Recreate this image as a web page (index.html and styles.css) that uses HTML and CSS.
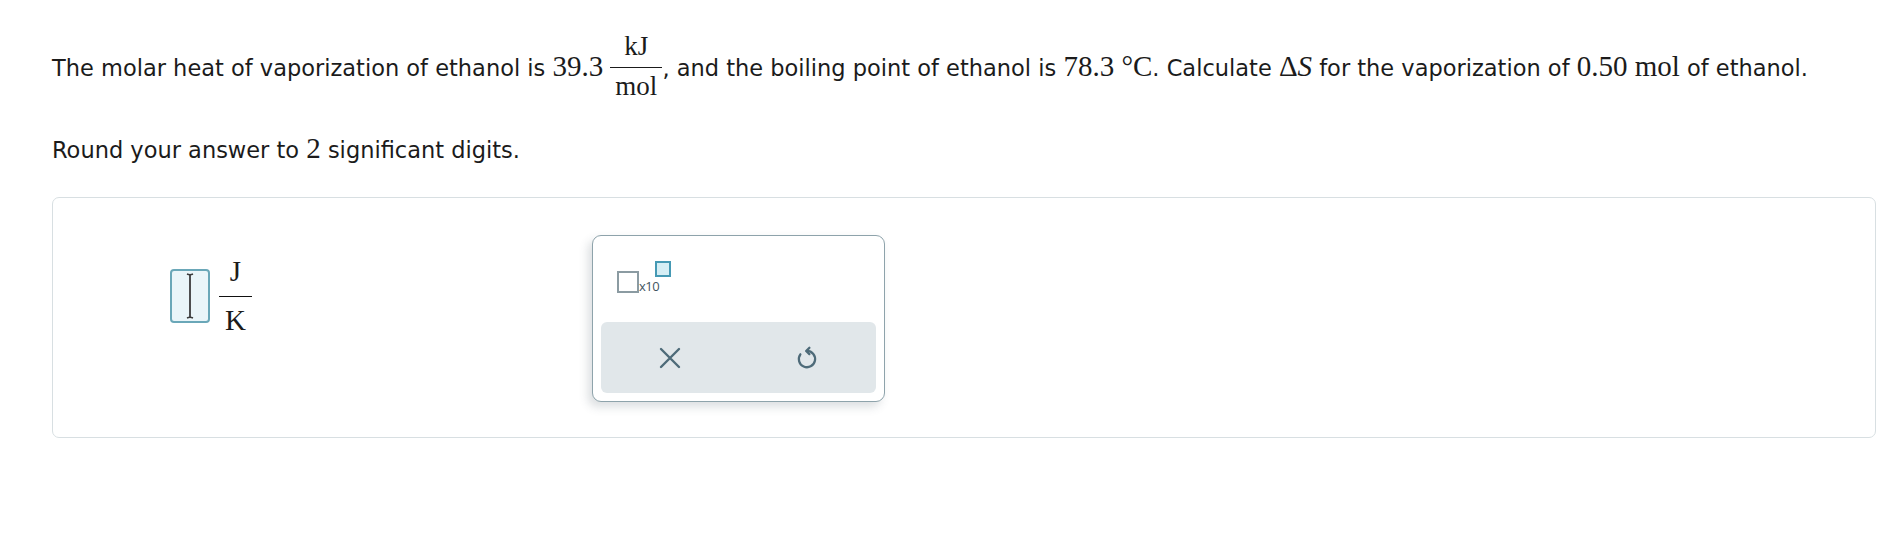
FILE: index.html
```html
<!DOCTYPE html>
<html>
<head>
<meta charset="utf-8">
<link rel="stylesheet" href="styles.css">
</head>
<body>
<div class="page">
  <p class="q1">The molar heat of vaporization of ethanol is <span class="m">39.3</span> <span class="frac"><span class="num">kJ</span><span class="den">mol</span></span>, and the boiling point of ethanol is <span class="m">78.3 °C</span>. Calculate <span class="m">Δ<i>S</i></span> for the vaporization of <span class="m">0.50 mol</span> of ethanol.</p>
  <p class="q2">Round your answer to <span class="m">2</span> significant digits.</p>
  <div class="card">
    <div class="answer">
      <div class="input">
        <svg class="cursor" width="12" height="48" viewBox="0 0 12 48">
          <path d="M6 3 V45" stroke="#3c3c3c" stroke-width="1.8" fill="none"/>
          <path d="M3 2 Q6 3.5 9 2 M3 46 Q6 44.5 9 46" stroke="#3c3c3c" stroke-width="1.4" fill="none"/>
        </svg>
      </div>
      <span class="frac unit"><span class="num">J</span><span class="den">K</span></span>
    </div>
    <div class="keypad">
      <div class="keys">
        <div class="sci">
          <span class="box-base"></span><span class="x10">x10</span><span class="box-exp"></span>
        </div>
      </div>
      <div class="actions">
        <div class="act">
          <svg width="24" height="24" viewBox="0 0 24 24">
            <path d="M3 3 L21 21 M21 3 L3 21" stroke="#4e6b79" stroke-width="2.4" stroke-linecap="round" fill="none"/>
          </svg>
        </div>
        <div class="act">
          <svg width="26" height="26" viewBox="0 0 24 24">
            <path d="M12 5.5 A7.5 7.5 0 1 1 5.9 8.6" stroke="#4e6b79" stroke-width="2.1" stroke-linecap="round" fill="none"/>
            <path d="M14.2 2.6 L11.2 5.5 L14.2 8.4" stroke="#4e6b79" stroke-width="2.1" stroke-linecap="round" stroke-linejoin="round" fill="none"/>
          </svg>
        </div>
      </div>
    </div>
  </div>
</div>
</body>
</html>
```

FILE: styles.css
```css
html, body {
  margin: 0;
  padding: 0;
  background: #ffffff;
}

.page {
  padding: 31px 12px 0 52px;
  font-family: "DejaVu Sans", Verdana, sans-serif;
  font-size: 22.5px;
  color: #1b1b1b;
}

.q1 {
  margin: 0;
  line-height: 66px;
  white-space: nowrap;
}

.q2 {
  margin: 0;
  padding-top: 31px;
  line-height: 32px;
}

.m {
  font-family: "Liberation Serif", "Times New Roman", serif;
  font-size: 29px;
}

.m i {
  font-style: italic;
}

.frac {
  display: inline-flex;
  flex-direction: column;
  align-items: stretch;
  vertical-align: 21px;
  font-family: "Liberation Serif", "Times New Roman", serif;
  font-size: 27px;
  line-height: 30px;
  text-align: center;
}

.frac .num {
  border-bottom: 1.5px solid #1b1b1b;
  padding: 0 5px 6px;
}

.frac .den {
  padding: 2.5px 5px 0;
}

.card {
  position: relative;
  margin-top: 31px;
  height: 241px;
  box-sizing: border-box;
  border: 1px solid #d8dfe2;
  border-radius: 7px;
  padding: 71px 0 0 117px;
}

.answer {
  display: flex;
  align-items: center;
  gap: 9px;
  height: 54px;
}

.input {
  width: 40px;
  height: 54px;
  box-sizing: border-box;
  border: 2px solid #6aa7b8;
  border-radius: 4px;
  background: #eaf5f9;
  display: flex;
  align-items: center;
  justify-content: center;
}

.cursor {
  display: block;
}

.unit {
  vertical-align: middle;
  font-size: 29px;
  line-height: 33px;
}

.unit .num {
  border-bottom: 1.6px solid #111111;
  padding: 0 6px 8px;
}

.unit .den {
  padding: 7px 6px 0;
}

.keypad {
  position: absolute;
  left: 539px;
  top: 37px;
  width: 293px;
  height: 167px;
  box-sizing: border-box;
  border: 1px solid #8ea3ab;
  border-radius: 9px;
  background: #ffffff;
  box-shadow: -4px 5px 10px rgba(60, 80, 90, 0.18);
  padding: 8px;
  display: flex;
  flex-direction: column;
}

.keys {
  height: 78px;
  padding: 17px 0 0 16px;
  box-sizing: border-box;
}

.sci {
  display: flex;
  align-items: flex-start;
  height: 40px;
}

.box-base {
  width: 22px;
  height: 22px;
  box-sizing: border-box;
  border: 2.5px solid #8b9ba2;
  margin-top: 10px;
}

.x10 {
  font-family: "Open Sans", "DejaVu Sans", sans-serif;
  font-size: 13px;
  color: #3f5560;
  margin-top: 18px;
  line-height: 14px;
  letter-spacing: -0.5px;
}

.box-exp {
  width: 16px;
  height: 16px;
  box-sizing: border-box;
  border: 2.5px solid #4599b4;
  background: #d5eef5;
  margin-left: -4px;
}

.actions {
  flex: 1;
  background: #e1e7ea;
  border-radius: 6px;
  display: grid;
  grid-template-columns: 1fr 1fr;
}

.act {
  display: flex;
  align-items: center;
  justify-content: center;
}
```
